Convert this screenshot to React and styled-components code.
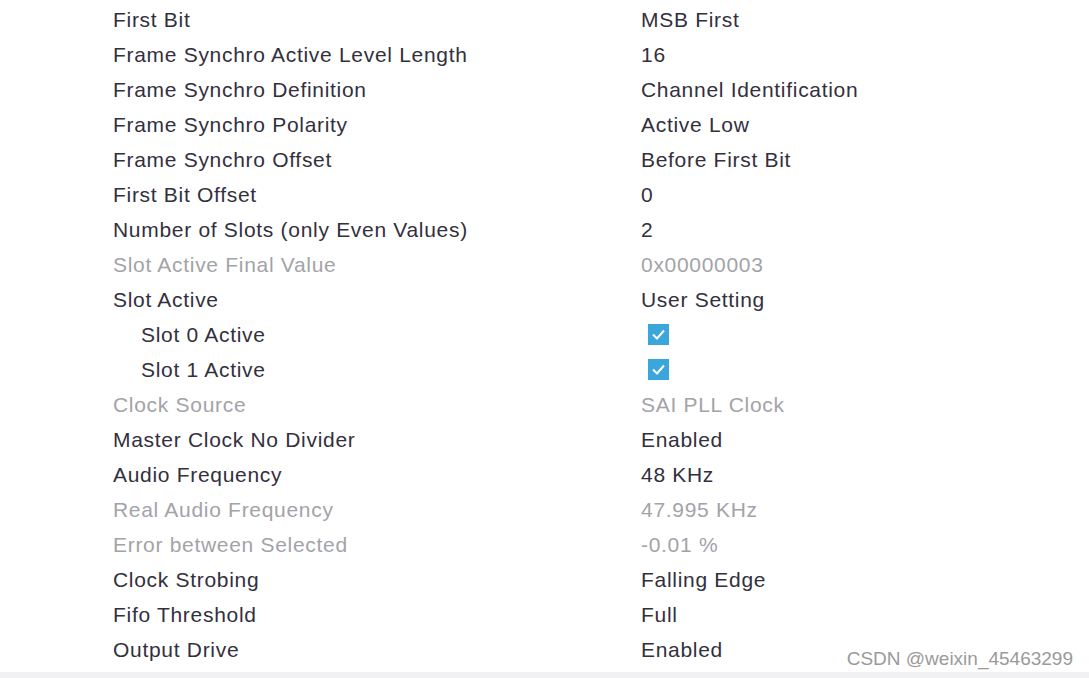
import React from 'react';
import styled, { createGlobalStyle } from 'styled-components';

const GlobalStyle = createGlobalStyle`
  html, body {
    margin: 0;
    padding: 0;
    background: #ffffff;
  }
  body {
    font-family: "Liberation Sans", Arial, sans-serif;
  }
`;

const Page = styled.div`
  position: relative;
  width: 1089px;
  height: 678px;
  overflow: hidden;
  background: #ffffff;
`;

const Table = styled.div`
  display: grid;
  grid-template-columns: 528px 1fr;
  grid-auto-rows: 35px;
  padding: 2px 0 0 113px;
`;

const Cell = styled.div`
  display: flex;
  align-items: center;
  font-size: 21px;
  letter-spacing: 0.7px;
  color: ${({ $muted }) => ($muted ? '#a3a3a8' : '#33303d')};
  padding-left: ${({ $indent }) => ($indent ? '28px' : '0')};
  white-space: nowrap;
`;

const Check = styled.span`
  display: inline-flex;
  align-items: center;
  justify-content: center;
  width: 21px;
  height: 21px;
  margin-left: 7px;
  background: #3aa6dc;
`;

const Footer = styled.div`
  position: absolute;
  left: 0;
  right: 0;
  bottom: 0;
  height: 6px;
  background: #f1f1f3;
`;

const Watermark = styled.div`
  position: absolute;
  right: 16px;
  bottom: 8px;
  font-size: 19px;
  color: #9a9a9a;
`;

const rows = [
  ['First Bit', 'MSB First'],
  ['Frame Synchro Active Level Length', '16'],
  ['Frame Synchro Definition', 'Channel Identification'],
  ['Frame Synchro Polarity', 'Active Low'],
  ['Frame Synchro Offset', 'Before First Bit'],
  ['First Bit Offset', '0'],
  ['Number of Slots (only Even Values)', '2'],
  ['Slot Active Final Value', '0x00000003', true],
  ['Slot Active', 'User Setting'],
  ['Slot 0 Active', 'check', false, true],
  ['Slot 1 Active', 'check', false, true],
  ['Clock Source', 'SAI PLL Clock', true],
  ['Master Clock No Divider', 'Enabled'],
  ['Audio Frequency', '48 KHz'],
  ['Real Audio Frequency', '47.995 KHz', true],
  ['Error between Selected', '-0.01 %', true],
  ['Clock Strobing', 'Falling Edge'],
  ['Fifo Threshold', 'Full'],
  ['Output Drive', 'Enabled'],
];

const CheckMark = () => (
  <Check>
    <svg width="17" height="17" viewBox="0 0 17 17">
      <path d="M3 8.5 L7 12.5 L14 4.5" fill="none" stroke="#ffffff" strokeWidth="2" />
    </svg>
  </Check>
);

const App = () => (
  <Page>
    <GlobalStyle />
    <Table>
      {rows.map(([label, value, muted, indent]) => (
        <React.Fragment key={label}>
          <Cell $muted={muted} $indent={indent}>{label}</Cell>
          <Cell $muted={muted}>{value === 'check' ? <CheckMark /> : value}</Cell>
        </React.Fragment>
      ))}
    </Table>
    <Watermark>CSDN @weixin_45463299</Watermark>
    <Footer />
  </Page>
);

export default App;
